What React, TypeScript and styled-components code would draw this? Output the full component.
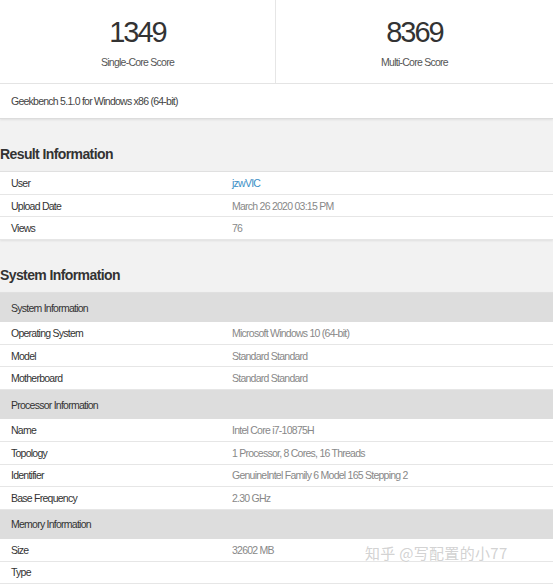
import React from "react";
import styled, { createGlobalStyle } from "styled-components";

const Global = createGlobalStyle`
  html, body { margin: 0; padding: 0; background: #f2f2f2; }
  body { font-family: "Liberation Sans", Arial, sans-serif; color: #333; }
`;

const Page = styled.div`
  position: relative;
  width: 553px;
  height: 584px;
  overflow: hidden;
  background: #f2f2f2;
`;

const TopCard = styled.section`
  background: #fff;
  border-bottom: 1px solid #dcdcdc;
  box-shadow: 0 1px 2px rgba(0, 0, 0, 0.08);
`;

const Scores = styled.div`
  display: grid;
  grid-template-columns: 276px 1fr;
  height: 83px;
  border-bottom: 1px solid #e4e4e4;
`;

const ScoreBox = styled.div<{ $divider?: boolean }>`
  display: flex;
  flex-direction: column;
  align-items: center;
  padding-top: 15px;
  border-right: ${(p) => (p.$divider ? "1px solid #e6e6e6" : "none")};
`;

const ScoreValue = styled.div`
  font-size: 29px;
  line-height: 34px;
  letter-spacing: -2px;
  color: #333;
`;

const ScoreLabel = styled.div`
  margin-top: 6px;
  font-size: 10.5px;
  line-height: 14px;
  letter-spacing: -0.75px;
  color: #555;
`;

const Platform = styled.div`
  height: 34px;
  display: flex;
  align-items: center;
  padding-left: 11px;
  font-size: 10.5px;
  letter-spacing: -0.75px;
  color: #444;
`;

const Heading = styled.h2`
  margin: 0;
  padding: 26px 0 8px 0;
  font-size: 14px;
  line-height: 18px;
  letter-spacing: -0.6px;
  font-weight: bold;
  color: #333;
`;

const Table = styled.section`
  background: #fff;
  border-top: 1px solid #e0e0e0;
  box-shadow: 0 1px 2px rgba(0, 0, 0, 0.08);
`;

const Row = styled.div`
  display: grid;
  grid-template-columns: 221px 1fr;
  align-items: center;
  height: 21.7px;
  border-bottom: 1px solid #e6e6e6;
  font-size: 10.5px;
  letter-spacing: -0.75px;
`;

const Label = styled.div`
  padding-left: 11px;
  color: #333;
`;

const Value = styled.div<{ $link?: boolean }>`
  padding-left: 11px;
  color: ${(p) => (p.$link ? "#3a8fc6" : "#888")};
`;

const GroupHeader = styled.div`
  height: 29px;
  display: flex;
  align-items: center;
  padding-left: 11px;
  background: #dddddd;
  font-size: 10.5px;
  letter-spacing: -0.75px;
  color: #333;
`;

const Watermark = styled.div`
  position: absolute;
  left: 365px;
  top: 542px;
  font-family: "Noto Sans CJK SC", "Liberation Sans", sans-serif;
  font-size: 15px;
  line-height: 22px;
  color: rgba(205, 205, 205, 0.9);
  text-shadow: 0 0 1px #fff, 0 0 1px #fff;
  letter-spacing: 0.3px;
`;

type Item = { label: string; value?: string; link?: boolean };
type Group = { title?: string; items: Item[] };

const result: Item[] = [
  { label: "User", value: "jzwVIC", link: true },
  { label: "Upload Date", value: "March 26 2020 03:15 PM" },
  { label: "Views", value: "76" },
];

const system: Group[] = [
  {
    title: "System Information",
    items: [
      { label: "Operating System", value: "Microsoft Windows 10 (64-bit)" },
      { label: "Model", value: "Standard Standard" },
      { label: "Motherboard", value: "Standard Standard" },
    ],
  },
  {
    title: "Processor Information",
    items: [
      { label: "Name", value: "Intel Core i7-10875H" },
      { label: "Topology", value: "1 Processor, 8 Cores, 16 Threads" },
      { label: "Identifier", value: "GenuineIntel Family 6 Model 165 Stepping 2" },
      { label: "Base Frequency", value: "2.30 GHz" },
    ],
  },
  {
    title: "Memory Information",
    items: [
      { label: "Size", value: "32602 MB" },
      { label: "Type", value: "" },
    ],
  },
];

const InfoRow = ({ item }: { item: Item }) => (
  <Row>
    <Label>{item.label}</Label>
    <Value $link={item.link}>{item.value}</Value>
  </Row>
);

export default function App() {
  return (
    <Page>
      <Global />
      <TopCard>
        <Scores>
          <ScoreBox $divider>
            <ScoreValue>1349</ScoreValue>
            <ScoreLabel>Single-Core Score</ScoreLabel>
          </ScoreBox>
          <ScoreBox>
            <ScoreValue>8369</ScoreValue>
            <ScoreLabel>Multi-Core Score</ScoreLabel>
          </ScoreBox>
        </Scores>
        <Platform>Geekbench 5.1.0 for Windows x86 (64-bit)</Platform>
      </TopCard>

      <Heading>Result Information</Heading>
      <Table>
        {result.map((it) => (
          <InfoRow key={it.label} item={it} />
        ))}
      </Table>

      <Heading>System Information</Heading>
      <Table>
        {system.map((g) => (
          <React.Fragment key={g.title}>
            <GroupHeader>{g.title}</GroupHeader>
            {g.items.map((it) => (
              <InfoRow key={it.label} item={it} />
            ))}
          </React.Fragment>
        ))}
      </Table>

      <Watermark>知乎 @写配置的小77</Watermark>
    </Page>
  );
}
